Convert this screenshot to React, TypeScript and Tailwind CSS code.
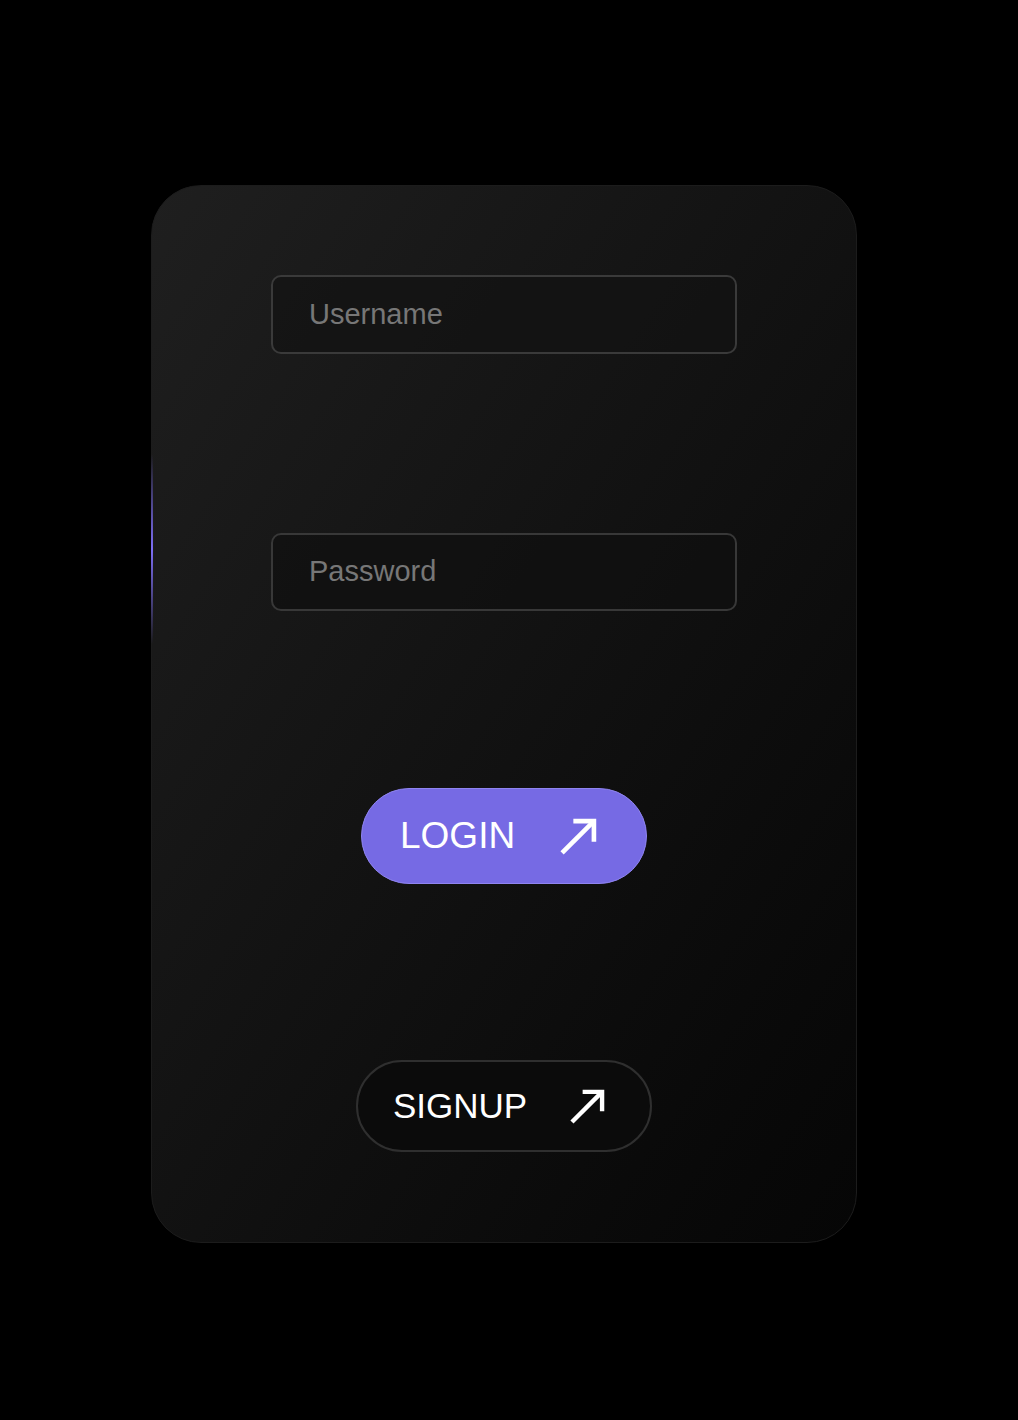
import React from "react";

function Arrow({ size, stroke }: { size: number; stroke: number }) {
  return (
    <svg width={size} height={size} viewBox="0 0 36 36" fill="none">
      <path d="M2 34 L33 3" stroke="white" strokeWidth={stroke} strokeLinecap="butt" />
      <path d="M13 3 H33 V23" stroke="white" strokeWidth={stroke} strokeLinecap="butt" strokeLinejoin="miter" />
    </svg>
  );
}

export default function App() {
  return (
    <div className="min-h-[1420px] w-full bg-black pt-[185px] pl-[151px]" style={{ fontFamily: '"Liberation Sans", Arial, sans-serif' }}>
      <div className="relative w-[706px] h-[1058px] rounded-[50px] border border-[#1c1c1c] bg-gradient-to-br from-[#1f1f1f] to-[#060606] flex flex-col items-center pt-[89px]">
        <div className="absolute left-[-1px] top-[268px] w-[2px] h-[190px] bg-gradient-to-b from-transparent via-[#7d6ef5] to-transparent" />
        <div className="w-[466px] h-[79px] rounded-[10px] border-2 border-[#3a3a3a] bg-[#131313]/70 flex items-center pl-[36px] text-[29px] text-[#777777]">
          Username
        </div>
        <div className="mt-[179px] w-[466px] h-[78px] rounded-[10px] border-2 border-[#383838] bg-[#101010]/70 flex items-center pl-[36px] text-[29px] text-[#777777]">
          Password
        </div>
        <div className="mt-[177px] w-[286px] h-[96px] rounded-full border border-[#8f84f0] bg-[#766ae4] flex items-center pl-[38px] text-white text-[37px]">
          <span>LOGIN</span>
          <span className="ml-[45px] mt-[1px]">
            <Arrow size={37} stroke={4.5} />
          </span>
        </div>
        <div className="mt-[176px] w-[296px] h-[92px] rounded-full border-2 border-[#2f2f2f] bg-[#0b0b0b] flex items-center pl-[35px] text-white text-[35px]">
          <span>SIGNUP</span>
          <span className="ml-[43px]">
            <Arrow size={35} stroke={4.5} />
          </span>
        </div>
      </div>
    </div>
  );
}
